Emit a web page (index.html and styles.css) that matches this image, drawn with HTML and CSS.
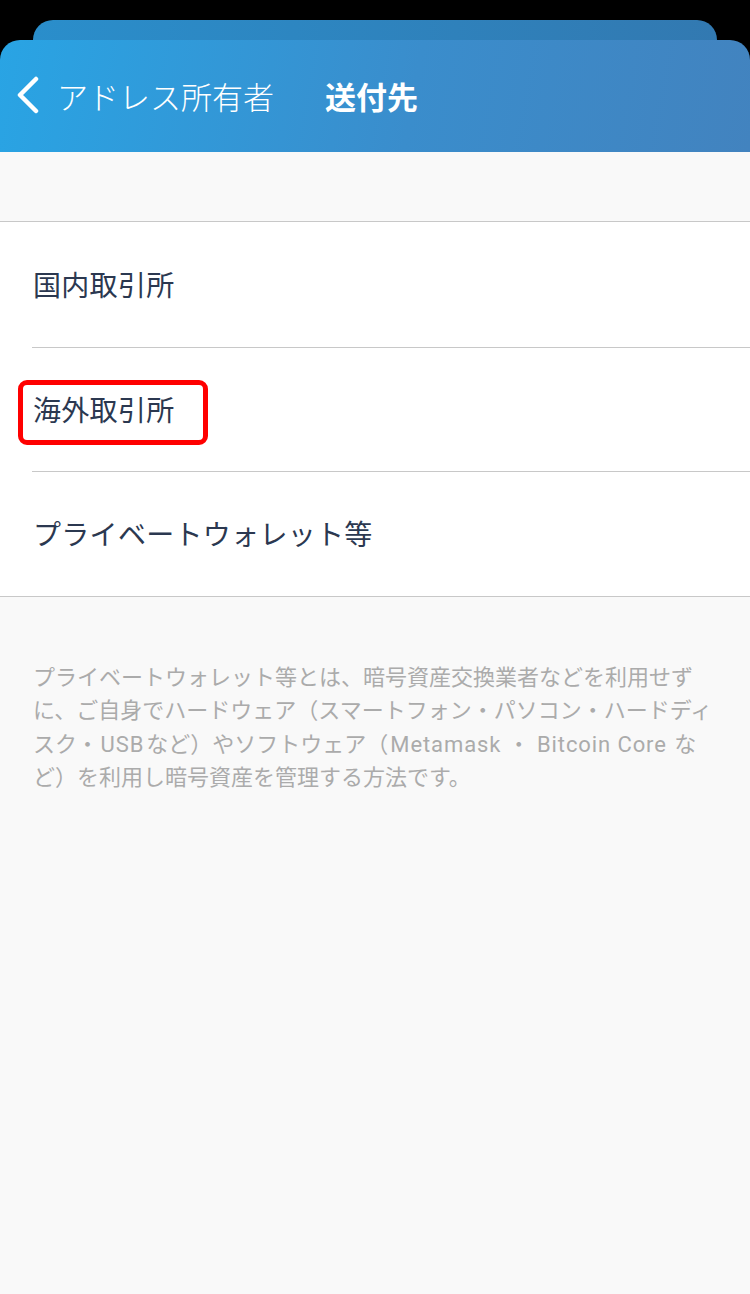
FILE: index.html
```html
<!DOCTYPE html>
<html lang="ja">
<head>
<meta charset="utf-8">
<title>送付先</title>
<link rel="stylesheet" href="styles.css">
</head>
<body>
<div class="screen">
  <div class="top">
    <div class="back-card"></div>
    <header class="header">
      <a class="back">
        <svg class="chevron" width="26" height="38" viewBox="0 0 26 38" aria-hidden="true">
          <path d="M20 3 L4 19 L20 35" fill="none" stroke="#fff" stroke-width="4.5" stroke-linecap="round" stroke-linejoin="round"/>
        </svg>
        <span class="back-label">アドレス所有者</span>
      </a>
      <h1 class="title">送付先</h1>
    </header>
  </div>
  <main class="content">
    <div class="spacer"></div>
    <ul class="list">
      <li class="row"><span class="row-label">国内取引所</span></li>
      <li class="row"><span class="row-label">海外取引所</span><span class="highlight"></span></li>
      <li class="row"><span class="row-label">プライベートウォレット等</span></li>
    </ul>
    <p class="note">プライベートウォレット等とは、暗号資産交換業者などを利用せずに、ご自身でハードウェア（スマートフォン・パソコン・ハードディスク・<span class="latin">USB</span>など）やソフトウェア（<span class="latin">Metamask ・ Bitcoin Core</span> など）を利用し暗号資産を管理する方法です。</p>
  </main>
</div>
</body>
</html>
```

FILE: styles.css
```css
* { box-sizing: border-box; }
html, body {
  margin: 0;
  padding: 0;
  background: #000;
}
body {
  font-family: "Noto Sans CJK JP", "Noto Sans", sans-serif;
  width: 750px;
  height: 1294px;
  overflow: hidden;
}
.screen {
  display: flex;
  flex-direction: column;
  height: 1294px;
}
.top {
  padding-top: 20px;
  background: #000;
}
.back-card {
  height: 20px;
  margin: 0 33px;
  border-radius: 20px 20px 0 0;
  background: linear-gradient(90deg, #2a8ecb 0%, #3279b1 100%);
}
.header {
  height: 112px;
  border-radius: 20px 20px 0 0;
  background: linear-gradient(100deg, #29a4e4 0%, #3a8dcc 55%, #4283bf 100%);
  display: flex;
  align-items: center;
  color: #fff;
  padding-left: 16px;
  padding-bottom: 2px;
}
.back {
  display: flex;
  align-items: center;
  gap: 15px;
}
.chevron { display: block; }
.back-label {
  font-size: 31px;
  font-weight: 300;
  line-height: 1;
}
.title {
  margin: 0 0 0 51px;
  font-size: 31px;
  font-weight: 700;
  line-height: 1;
}
.content {
  flex: 1;
  background: #f9f9f9;
}
.spacer {
  height: 70px;
  border-bottom: 1px solid #c8c8c8;
}
.list {
  list-style: none;
  margin: 0;
  padding: 0;
  background: #fff;
  border-bottom: 1px solid #c8c8c8;
}
.row {
  position: relative;
  height: 124.5px;
  display: flex;
  align-items: center;
  padding-left: 33px;
  font-size: 28px;
  color: #2b3850;
}
.row + .row::before {
  content: "";
  position: absolute;
  top: 0;
  left: 32px;
  right: 0;
  border-top: 1px solid #c8c8c8;
}
.row-label {
  line-height: 1;
  letter-spacing: 0.3px;
}
.highlight {
  position: absolute;
  left: 18px;
  top: 33px;
  width: 190px;
  height: 65px;
  border: 5px solid #ff0000;
  border-radius: 9px;
}
.note {
  margin: 0;
  padding: 64px 30px 0 33px;
  font-family: Roboto, "Noto Sans CJK JP", sans-serif;
  font-size: 22px;
  line-height: 33.5px;
  color: #ababab;
}
.latin {
  letter-spacing: 0.9px;
  margin: 0 2px;
}
```
